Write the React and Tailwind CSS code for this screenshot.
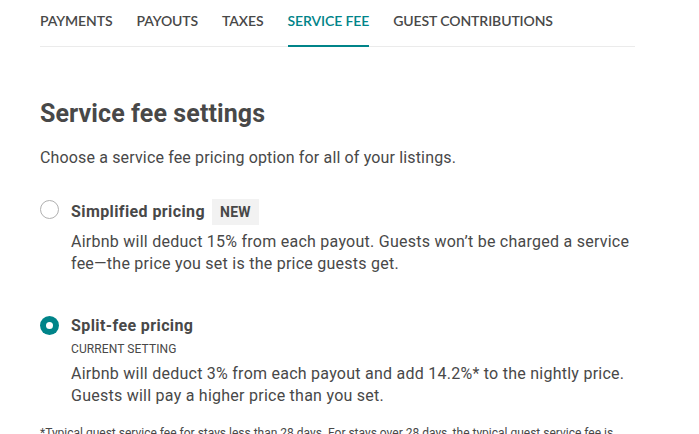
import React from 'react';

const tabs = ['Payments', 'Payouts', 'Taxes', 'Service fee', 'Guest contributions'];

function Radio({ checked }) {
  if (checked) {
    return (
      <span className="mt-[1px] flex h-[19px] w-[19px] shrink-0 items-center justify-center rounded-full bg-[#008489]">
        <span className="h-[7px] w-[7px] rounded-full bg-white" />
      </span>
    );
  }
  return <span className="mt-[1px] h-[19px] w-[19px] shrink-0 rounded-full border border-[#b0b0b0] bg-white" />;
}

export default function App() {
  return (
    <div className="min-h-screen bg-white text-[#484848] pl-10 w-[635px]" style={{ fontFamily: 'Roboto, "Liberation Sans", sans-serif' }}>
      <nav className="flex gap-[24px] border-b border-[#ebebeb] h-[47px]" style={{ fontFamily: 'Lato, "Liberation Sans", sans-serif' }}>
        {tabs.map(t => (
          <div
            key={t}
            className={
              'pt-[10px] text-[14px] font-semibold uppercase tracking-[-0.1px] ' +
              (t === 'Service fee' ? 'text-[#008489] border-b-2 border-[#008489] -mb-px' : '')
            }
          >
            {t}
          </div>
        ))}
      </nav>

      <h1 className="mt-[52px] text-[25px] font-bold leading-[30px] tracking-[0.1px] text-[#484848]">Service fee settings</h1>
      <p className="mt-[18px] text-[16px] leading-[22px] tracking-[0.15px]">Choose a service fee pricing option for all of your listings.</p>

      <div className="mt-[30px] flex gap-3">
        <Radio />
        <div className="flex-1">
          <div className="flex items-center gap-[7px]">
            <span className="text-[16px] font-bold tracking-[0.4px]">Simplified pricing</span>
            <span className="bg-[#f2f2f2] px-2 h-[26px] flex items-center text-[14px] font-bold tracking-[0.3px]">NEW</span>
          </div>
          <p className="mt-[6px] text-[16px] leading-[22px] tracking-[0.25px]">
            Airbnb will deduct 15% from each payout. Guests won’t be charged a service fee—the price you set is the price guests get.
          </p>
        </div>
      </div>

      <div className="mt-[40px] flex gap-3">
        <Radio checked />
        <div className="flex-1">
          <div className="text-[16px] font-bold leading-[22px] tracking-[0.4px]">Split-fee pricing</div>
          <div className="mt-[4px] text-[12px] uppercase leading-[16px] tracking-[0.1px]">Current setting</div>
          <p className="mt-[6px] text-[16px] leading-[22px] tracking-[0.25px]">
            Airbnb will deduct 3% from each payout and add 14.2%* to the nightly price. Guests will pay a higher price than you set.
          </p>
        </div>
      </div>

      <p className="mt-[18px] text-[12px] leading-[16px]">
        *Typical guest service fee for stays less than 28 days. For stays over 28 days, the typical guest service fee is lower.
      </p>
    </div>
  );
}
